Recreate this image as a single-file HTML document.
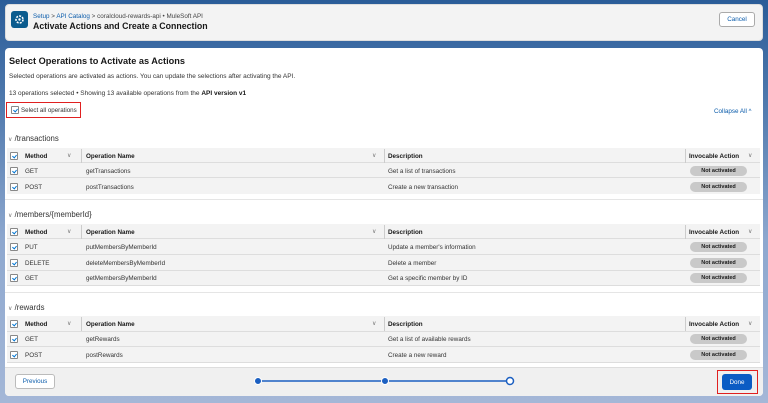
<!DOCTYPE html>
<html><head><style>
*{box-sizing:border-box;margin:0;padding:0}
body{width:768px;height:403px;overflow:hidden;font-family:"Liberation Sans",sans-serif;background:linear-gradient(180deg,#2a5c98 0%,#4f79ad 25%,#8ea8cf 60%,#a4b7d7 100%);position:relative;color:#181818}
.a{position:absolute}
.hdr{left:5px;top:4px;width:758px;height:37px;background:#f3f3f3;border-radius:4px;border:1px solid #ddd}
.icon{left:11px;top:11px;width:17px;height:17px;background:#0b5c8e;border-radius:3px}
.card{left:5px;top:48px;width:758px;height:348px;background:#fff;border-radius:4px;overflow:hidden}
.cb{width:8px;height:8px;border:1px solid #888;border-radius:1px;background:#fff}
.cb:after{content:"";position:absolute;left:2px;top:1px;width:2px;height:3px;border-right:1px solid #0176d3;border-bottom:1px solid #0176d3;transform:rotate(40deg)}
.tbl{left:2px;width:753px;background:#f3f3f3;font-size:6px}
.row{position:absolute;left:0;width:753px;border-bottom:1px solid #ddd}
.hd{font-weight:bold;font-size:6.3px}
.pill{position:absolute;left:685px;width:57px;height:10px;background:#c9c9c9;border-radius:6px;font-size:5.5px;font-weight:bold;display:flex;align-items:center;justify-content:center}
.sec{font-size:7.8px;color:#333}
.chev{font-size:6px;color:#777}
.btn{display:flex;align-items:center;justify-content:center}
</style></head><body>
<div class="a hdr"></div>
<div class="a icon"><svg width="17" height="17"><circle cx="8.5" cy="8.5" r="3.5" fill="none" stroke="#fff" stroke-width="1.6" stroke-dasharray="2 1.2"/><circle cx="8.5" cy="8.5" r="1.2" fill="#fff"/></svg></div>
<div class="a" style="left:33px;top:13px;font-size:6.3px;color:#444"><span style="color:#0b5cab">Setup</span> &gt; <span style="color:#0b5cab">API Catalog</span> &gt; coralcloud-rewards-api • MuleSoft API</div>
<div class="a" style="left:33px;top:21px;font-size:8.8px;font-weight:bold">Activate Actions and Create a Connection</div>
<div class="a btn" style="left:719px;top:12px;width:36px;height:15px;border:1px solid #aaa;border-radius:3px;background:#fff;font-size:6.3px;color:#0b5cab">Cancel</div>

<div class="a card">
<div class="a" style="left:4px;top:8px;font-size:9.2px;font-weight:bold">Select Operations to Activate as Actions</div>
<div class="a" style="left:4px;top:25px;font-size:6.5px;color:#333">Selected operations are activated as actions. You can update the selections after activating the API.</div>
<div class="a" style="left:4px;top:42px;font-size:6.5px;color:#333">13 operations selected • Showing 13 available operations from the <b style="color:#181818">API version v1</b></div>
<div class="a" style="left:1px;top:54px;width:75px;height:16px;border:1.5px solid #e02020"></div>
<div class="a cb" style="left:6px;top:58px"></div>
<div class="a" style="left:16px;top:59px;font-size:6.2px;color:#333">Select all operations</div>
<div class="a" style="left:709px;top:60px;font-size:6.3px;color:#0b5cab">Collapse All <span style="font-size:6px">^</span></div>

<div class="a sec" style="left:3px;top:86px"><span class="chev">&#8744;</span> /transactions</div>
<div class="a tbl" style="top:100px;height:46px">
<div class="row" style="top:0;height:15px"></div><div class="row" style="top:15px;height:15px"></div><div class="row" style="top:30px;height:15px;border:0"></div>
</div>
<div class="a" style="left:0;top:151px;width:758px;border-top:1px solid #e5e5e5"></div>
<div class="a sec" style="left:3px;top:162px"><span class="chev">&#8744;</span> /members/{memberId}</div>
<div class="a tbl" style="top:176px;height:62px">
<div class="row" style="top:0;height:15px"></div><div class="row" style="top:15px;height:16px"></div><div class="row" style="top:31px;height:16px"></div><div class="row" style="top:47px;height:15px"></div>
</div>
<div class="a" style="left:0;top:244px;width:758px;border-top:1px solid #e5e5e5"></div>
<div class="a sec" style="left:3px;top:255px"><span class="chev">&#8744;</span> /rewards</div>
<div class="a tbl" style="top:268px;height:47px">
<div class="row" style="top:0;height:16px"></div><div class="row" style="top:16px;height:15px"></div><div class="row" style="top:31px;height:16px"></div>
</div>

<div class="a" style="left:0;top:319px;width:758px;height:29px;background:#f0f0f0;border-top:1px solid #ddd"></div>
<div class="a btn" style="left:10px;top:326px;width:40px;height:15px;background:#fff;border:1px solid #bbb;border-radius:3px;font-size:6.3px;color:#0b5cab">Previous</div>
<svg class="a" style="left:248px;top:328px" width="262" height="10"><line x1="5" y1="5" x2="257" y2="5" stroke="#1b5fc1" stroke-width="1.5"/><circle cx="5" cy="5" r="3.5" fill="#1b5fc1" stroke="#fff"/><circle cx="132" cy="5" r="3.5" fill="#1b5fc1" stroke="#fff"/><circle cx="257" cy="5" r="3.5" fill="#fff" stroke="#1b5fc1" stroke-width="1.5"/></svg>
<div class="a" style="left:712px;top:322px;width:41px;height:24px;border:1.5px solid #e02020"></div>
<div class="a btn" style="left:717px;top:326px;width:30px;height:16px;background:#0b5cc4;border-radius:3px;font-size:6.3px;color:#fff">Done</div>
</div>
<div id="t"></div>
<script>
var secs=[[148,[["GET","getTransactions","Get a list of transactions"],["POST","postTransactions","Create a new transaction"]]],
[224,[["PUT","putMembersByMemberId","Update a member's information"],["DELETE","deleteMembersByMemberId","Delete a member"],["GET","getMembersByMemberId","Get a specific member by ID"]]],
[316,[["GET","getRewards","Get a list of available rewards"],["POST","postRewards","Create a new reward"]]]];
var h="";
secs.forEach(function(s){var y=s[0];
h+='<div class="a cb" style="left:10px;top:'+(y+4)+'px"></div>';
h+='<div class="a hd" style="left:25px;top:'+(y+5)+'px">Method</div><div class="a chev" style="left:67px;top:'+(y+4)+'px">&#8744;</div>';
h+='<div class="a" style="left:81px;top:'+(y+1)+'px;height:14px;border-left:1px solid #ccc"></div>';
h+='<div class="a hd" style="left:86px;top:'+(y+5)+'px">Operation Name</div><div class="a chev" style="left:372px;top:'+(y+4)+'px">&#8744;</div>';
h+='<div class="a" style="left:384px;top:'+(y+1)+'px;height:14px;border-left:1px solid #ccc"></div>';
h+='<div class="a hd" style="left:388px;top:'+(y+5)+'px">Description</div>';
h+='<div class="a" style="left:685px;top:'+(y+1)+'px;height:14px;border-left:1px solid #ccc"></div>';
h+='<div class="a hd" style="left:689px;top:'+(y+5)+'px">Invocable Action</div><div class="a chev" style="left:748px;top:'+(y+4)+'px">&#8744;</div>';
s[1].forEach(function(r,i){var ry=y+15+i*15.5;
h+='<div class="a cb" style="left:10px;top:'+(ry+4)+'px"></div>';
h+='<div class="a" style="left:25px;top:'+(ry+5)+'px;font-size:6.3px;color:#333">'+r[0]+'</div>';
h+='<div class="a" style="left:86px;top:'+(ry+5)+'px;font-size:6.3px;color:#333">'+r[1]+'</div>';
h+='<div class="a" style="left:388px;top:'+(ry+5)+'px;font-size:6.3px;color:#333">'+r[2]+'</div>';
h+='<div class="pill" style="left:690px;top:'+(ry+3)+'px">Not activated</div>';});
});
document.getElementById("t").innerHTML=h;
</script>
</body></html>
